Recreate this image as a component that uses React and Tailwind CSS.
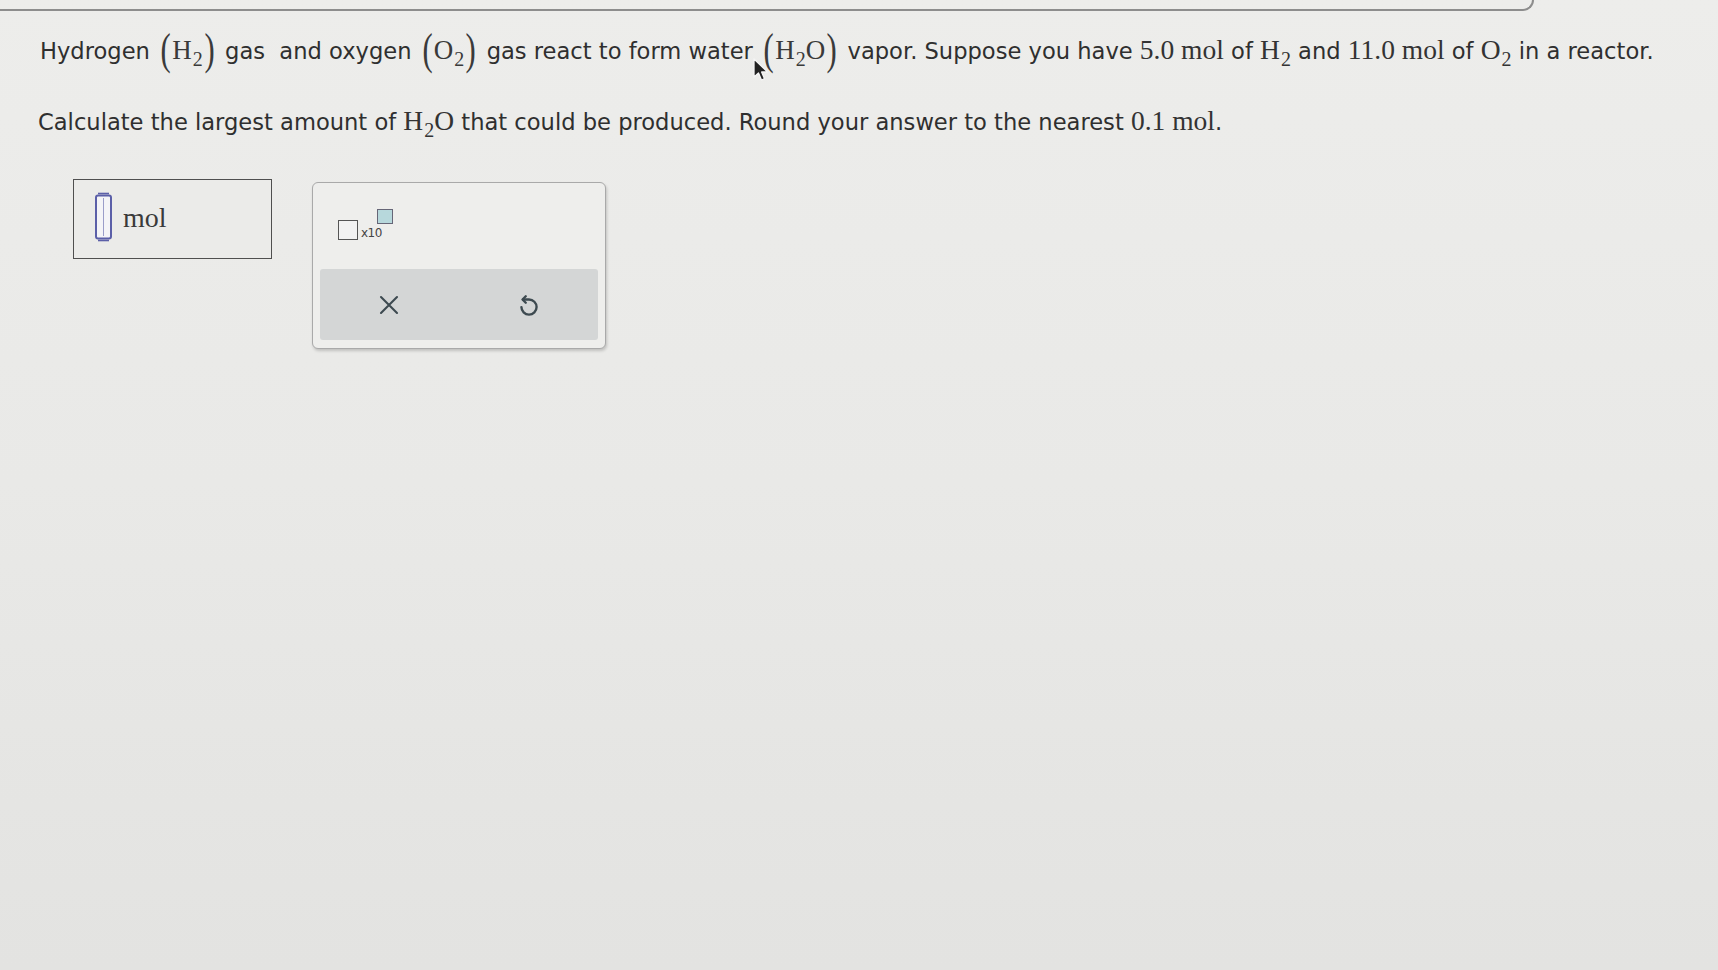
import React from "react";

const sans = "font-['DejaVu_Sans','Verdana',sans-serif]";
const serif = "font-['Liberation_Serif','Times_New_Roman',serif]";

function Paren({ children }) {
  return (
    <span className={`${serif} inline-flex items-baseline mx-[10px] text-[#3a3a3a]`}>
      <span className="inline-block text-[34px] leading-none scale-y-[1.3] scale-x-[0.9] font-light translate-y-[2px]">(</span>
      <span className="text-[27px] px-[1px]">{children}</span>
      <span className="inline-block text-[34px] leading-none scale-y-[1.3] scale-x-[0.9] font-light translate-y-[2px]">)</span>
    </span>
  );
}

function M({ children }) {
  return <span className={`${serif} text-[27.5px] text-[#333]`}>{children}</span>;
}

function Sub({ children }) {
  return <sub className="text-[20px] relative top-[7px] ml-[1px]">{children}</sub>;
}

export default function App() {
  return (
    <div className="relative w-full h-[970px] overflow-hidden bg-linear-to-b from-[#ededeb] via-[#e9e9e7] to-[#e3e3e1] text-[#333]">
      {/* bottom of card above */}
      <div className="w-[1534px] h-[11px] border-b-[2px] border-r-[2px] border-[#8d8d8d] rounded-br-[14px]"></div>

      <div className={`${sans} pl-[40px] pt-[18px] text-[22.6px] text-[#2f2f2f]`}>
        <p className="flex items-baseline whitespace-pre h-[44px]">
          <span>Hydrogen</span>
          <Paren>
            H<Sub>2</Sub>
          </Paren>
          <span>gas  and oxygen</span>
          <Paren>
            O<Sub>2</Sub>
          </Paren>
          <span>gas react to form water</span>
          <Paren>
            H<Sub>2</Sub>O
          </Paren>
          <span>vapor. Suppose you have </span>
          <M>5.0 mol</M>
          <span> of </span>
          <M>
            H<Sub>2</Sub>
          </M>
          <span> and </span>
          <M>11.0 mol</M>
          <span> of </span>
          <M>
            O<Sub>2</Sub>
          </M>
          <span> in a reactor.</span>
        </p>

        <p className="flex items-baseline whitespace-pre mt-[27px] -ml-[2px]">
          <span>Calculate the largest amount of </span>
          <M>
            H<Sub>2</Sub>O
          </M>
          <span> that could be produced. Round your answer to the nearest </span>
          <M>0.1 mol</M>
          <span>.</span>
        </p>

        <div className="flex items-start mt-[38px] ml-[33px]">
          {/* answer box */}
          <div className="w-[199px] h-[80px] border border-[#4f4f4f] bg-[#ebebe9] flex items-start pt-[12px] pl-[19px]">
            <svg width="21" height="50" viewBox="0 0 21 50" className="shrink-0">
              <line x1="5" y1="1.5" x2="16" y2="1.5" stroke="#5b5fa8" strokeWidth="1.6" />
              <line x1="5" y1="48.5" x2="16" y2="48.5" stroke="#5b5fa8" strokeWidth="1.6" />
              <rect x="3" y="3.5" width="15" height="43" rx="2" fill="#f4f4f7" stroke="#5b5fa8" strokeWidth="2" />
              <line x1="10.5" y1="6" x2="10.5" y2="44" stroke="#9a9dc9" strokeWidth="1" />
            </svg>
            <span className={`${serif} text-[28px] text-[#3a3a3a] ml-[9px] mt-[12px] leading-none`}>mol</span>
          </div>

          {/* tool panel */}
          <div className="ml-[40px] mt-[3px] w-[294px] h-[167px] rounded-[6px] border border-[#a9a9a9] bg-[#eeeeec] shadow-[1px_2px_3px_rgba(0,0,0,0.18)] flex flex-col">
            <div className="h-[86px] relative">
              <div className="absolute left-[25px] top-[37px] w-[20px] h-[20px] border-[1.5px] border-[#555] bg-[#f2f2f2]"></div>
              <span className={`${sans} absolute left-[48px] top-[44px] text-[12px] text-[#444] leading-none tracking-[-0.5px]`}>x10</span>
              <div className="absolute left-[64px] top-[26px] w-[16px] h-[15px] border-[1.5px] border-[#667] bg-[#b7d8dc]"></div>
            </div>
            <div className="mx-[7px] mb-[8px] flex-1 rounded-[3px] bg-[#d4d6d6] relative">
              <svg width="22" height="22" viewBox="0 0 22 22" className="absolute left-[58px] top-[25px]">
                <path d="M3 3 L19 19 M19 3 L3 19" stroke="#3d4a50" strokeWidth="2.1" strokeLinecap="round" />
              </svg>
              <svg width="26" height="26" viewBox="0 0 24 24" fill="none" stroke="#3d4a50" strokeWidth="2.2" strokeLinecap="round" strokeLinejoin="round" className="absolute left-[196px] top-[24px]">
                <path d="M9 3 L6 6 L9 9" />
                <path d="M6.5 6 H12 a7 7 0 1 1 -7 7" />
              </svg>
            </div>
          </div>
        </div>
      </div>

      {/* mouse pointer over the text */}
      <svg className="absolute left-[752px] top-[58px]" width="20" height="24" viewBox="0 0 20 24">
        <path d="M2 1 L2 19 L6.5 15 L9.5 22 L12.5 20.7 L9.6 14 L15.5 14 Z" fill="#222" stroke="#f5f5f5" strokeWidth="1.3" strokeLinejoin="round" />
      </svg>
    </div>
  );
}
